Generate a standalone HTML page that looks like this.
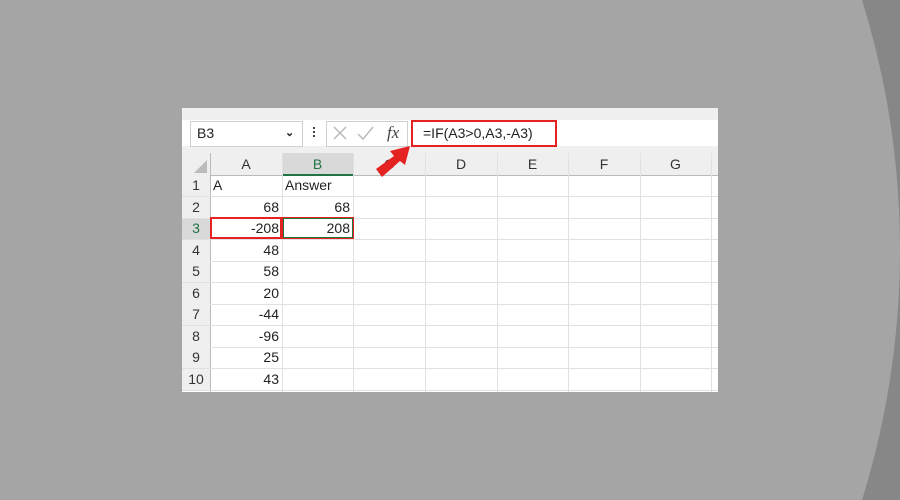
<!DOCTYPE html><html style="margin:0;overflow:hidden;width:900px;height:500px"><head><style>
body{margin:0;width:900px;height:500px;overflow:hidden;font-family:"Liberation Sans",sans-serif}
.w{position:relative;width:900px;height:500px;overflow:hidden;background:#878787}
.circ{position:absolute;left:-782px;top:-591px;width:1682px;height:1682px;border-radius:50%;background:#a5a5a5}
.s{position:absolute;left:182px;top:108px;width:536px;height:284px;background:#fff;overflow:hidden}
.a{position:absolute}
.t{position:absolute;font-size:14px;color:#222;line-height:21px}
</style></head><body><div class="w">
<div class="circ"></div>
<div class="s">
<div class="a" style="left:0;top:0;width:536px;height:12px;background:#f0f0f0"></div>
<div class="a" style="left:0;top:38px;width:536px;height:7px;background:#f0f0f0"></div>
<div class="a" style="left:8px;top:13px;width:111px;height:24px;border:1px solid #d0d0d0;background:#fff"></div>
<div class="t" style="left:15px;top:15px">B3</div>
<div class="t" style="left:103px;top:15px;font-size:11px;font-weight:bold">&#8964;</div>
<div class="a" style="left:131px;top:19px;width:2px;height:2px;background:#444;box-shadow:0 4px #444,0 8px #444"></div>
<div class="a" style="left:144px;top:13px;width:80px;height:24px;border:1px solid #d0d0d0"></div>
<svg class="a" style="left:150px;top:17px" width="60" height="18"><path d="M2 2L14 14M14 2L2 14" stroke="#bbb" stroke-width="1.5"/><path d="M26 9L31 14L41 2" stroke="#bbb" stroke-width="1.5" fill="none"/></svg>
<div class="t" style="left:205px;top:14px;font-family:'Liberation Serif',serif;font-style:italic;font-size:17px;color:#444">fx</div>
<div class="a" style="left:229px;top:12px;width:146px;height:27px;border:2px solid #e52222;box-sizing:border-box"></div>
<div class="t" style="left:241px;top:15px">=IF(A3&gt;0,A3,-A3)</div>
<div class="a" style="left:0;top:45px;width:536px;height:22px;background:#efefef;border-bottom:1px solid #bbb"></div>
<div class="a" style="left:100px;top:45px;width:71px;height:21px;background:#d9d9d9;border-bottom:2px solid #217346"></div>
<svg class="a" style="left:10px;top:50px" width="16" height="16"><path d="M15 2V15H2Z" fill="#bbb"/></svg>
<div class="a" style="left:0;top:110px;width:28px;height:21px;background:#d9d9d9"></div>
<div id="g"></div>
<div class="a" style="left:28px;top:109px;width:72px;height:22px;border:2px solid #e52222;box-sizing:border-box"></div>
<div class="a" style="left:100px;top:109px;width:72px;height:22px;border:2px solid #e52222;box-sizing:border-box"></div>
<div class="a" style="left:101px;top:110px;width:70px;height:20px;border:1px solid #217346;box-sizing:border-box"></div>
</div>
<svg class="a" style="left:372px;top:140px" width="42" height="40"><path d="M10 37L4 29L22 16L18 11L38 6L33 25L28 21Z" fill="#e52222"/></svg>
</div>
<script>
var g=document.getElementById('g'),h='';
var cols=[0,28,100,171,243,315,386,458,529];var L=['A','B','C','D','E','F','G'];
for(var i=1;i<cols.length;i++){h+='<div class="a" style="left:'+cols[i]+'px;top:45px;width:1px;height:240px;background:'+(i==1?'#bbb':'#e1e1e1')+'"></div>';}
for(var i=0;i<7;i++){h+='<div class="t" style="left:'+cols[i+1]+'px;width:'+(cols[i+2]-cols[i+1])+'px;text-align:center;top:46px;color:'+(i==1?'#217346':'#333')+'">'+L[i]+'</div>';}
var A=['A','68','-208','48','58','20','-44','-96','25','43'];
for(var r=0;r<10;r++){var y=67+r*21.5;
h+='<div class="a" style="left:0;top:'+(y+21)+'px;width:536px;height:1px;background:#e1e1e1"></div>';
h+='<div class="t" style="left:0;width:28px;text-align:center;top:'+y+'px;color:'+(r==2?'#217346':'#333')+';background:'+(r==2?'':'#efefef')+'">'+(r+1)+'</div>';
if(r==0)h+='<div class="t" style="left:31px;top:'+y+'px">A</div><div class="t" style="left:103px;top:'+y+'px">Answer</div>';
else h+='<div class="t" style="left:28px;width:69px;text-align:right;top:'+y+'px">'+A[r]+'</div>';
if(r==1||r==2)h+='<div class="t" style="left:100px;width:68px;text-align:right;top:'+y+'px">'+(r==1?'68':'208')+'</div>';}
g.innerHTML=h;
</script>
</body></html>
